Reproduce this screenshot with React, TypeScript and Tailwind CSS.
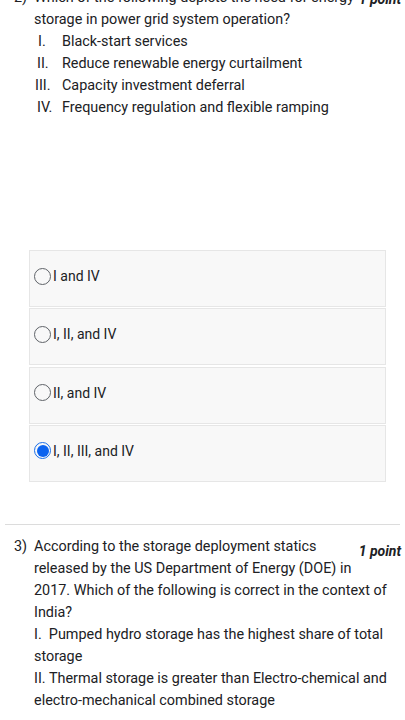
const Q2_ITEMS = [
  { num: 'I.', text: 'Black-start services', off: 'pl-[4px]' },
  { num: 'II.', text: 'Reduce renewable energy curtailment', off: 'pl-[3px]' },
  { num: 'III.', text: 'Capacity investment deferral', off: 'pl-[1px]' },
  { num: 'IV.', text: 'Frequency regulation and flexible ramping', off: 'pl-[3px]' },
];

const OPTIONS = ['I and IV', 'I, II, and IV', 'II, and IV', 'I, II, III, and IV'];

function Radio({ checked }: { checked: boolean }) {
  if (checked) {
    return (
      <span className="flex h-[17px] w-[17px] shrink-0 items-center justify-center rounded-full border border-[#1a6fe8]">
        <span className="h-[12px] w-[12px] rounded-full bg-[#0b63ef]" />
      </span>
    );
  }
  return <span className="h-[17px] w-[17px] shrink-0 rounded-full border border-[#5f6368]" />;
}

export default function App() {
  const selected = 3;

  return (
    <div
      className="min-h-[720px] bg-white text-[14.4px] leading-[22px] text-[#202124]"
      style={{ fontFamily: 'Roboto, "Liberation Sans", sans-serif' }}
    >
      <div className="-mt-[13px] flex pl-[14px] pr-[4px]">
        <span className="w-[20px] shrink-0">2)</span>
        <div className="flex-1">
          <span className="float-right mt-[1px] pl-[4px] text-[14px] font-bold italic">1 point</span>
          Which of the following depicts the need for energy
          <br />
          storage in power grid system operation?
          <ol>
            {Q2_ITEMS.map((item) => (
              <li key={item.num} className="flex">
                <span className={`w-[28px] shrink-0 ${item.off}`}>{item.num}</span>
                <span>{item.text}</span>
              </li>
            ))}
          </ol>
        </div>
      </div>

      <div className="mt-[131px] flex flex-col gap-[1.33px] pl-[29px] pr-[19px]">
        {OPTIONS.map((opt, i) => (
          <div key={opt} className="h-[57px] border border-[#e6e6e6] bg-[#f8f8f8] pl-[4px] pt-[14px]">
            <div className="flex items-center gap-[2px] text-[14px]">
              <Radio checked={i === selected} />
              <span>{opt}</span>
            </div>
          </div>
        ))}
      </div>

      <div className="mx-[5px] mt-[42px] border-t border-[#dcdcdc]" />

      <div className="mt-[11px] flex pl-[14px] pr-[4px]">
        <span className="w-[20px] shrink-0">3)</span>
        <div className="flex-1">
          <span className="float-right mt-[4px] pl-[4px] text-[14px] font-bold italic">1 point</span>
          According to the storage deployment statics released by the US Department of Energy (DOE) in 2017.
          Which of the following is correct in the context of India?
          <div>I.&nbsp; Pumped hydro storage has the highest share of total storage</div>
          <div>II. Thermal storage is greater than Electro-chemical and electro-mechanical combined storage</div>
        </div>
      </div>
    </div>
  );
}
